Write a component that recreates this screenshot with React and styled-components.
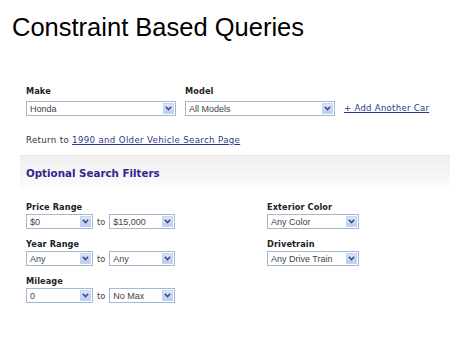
import React from 'react';
import styled, { createGlobalStyle } from 'styled-components';

const GlobalStyle = createGlobalStyle`
  html, body {
    margin: 0;
    padding: 0;
    background: #ffffff;
  }
  body {
    width: 474px;
    height: 355px;
    overflow: hidden;
    font-family: "DejaVu Sans", Verdana, sans-serif;
  }
`;

const Page = styled.div`
  width: 474px;
  height: 355px;
  background: #fff;
`;

const Title = styled.h1`
  margin: 0;
  padding: 12px 0 0 12px;
  font-family: "Liberation Sans", Arial, sans-serif;
  font-weight: normal;
  font-size: 25.5px;
  line-height: 30px;
  color: #000;
`;

const Form = styled.div`
  padding: 44px 0 0 26px;
`;

const TopRow = styled.div`
  display: flex;
  align-items: flex-end;
  gap: 9px;
`;

const Field = styled.div`
  display: flex;
  flex-direction: column;
  gap: ${p => p.$gap || 5}px;
`;

const Label = styled.div`
  font-size: 8.2px;
  font-weight: bold;
  line-height: 10px;
  color: #222;
  letter-spacing: 0.1px;
`;

const Box = styled.div`
  box-sizing: border-box;
  width: ${p => p.$w}px;
  height: 15px;
  border: 1px solid #a5b8d2;
  background: #fff;
  display: flex;
  align-items: center;
  justify-content: space-between;
  padding: 0 1px 0 3px;
`;

const BoxText = styled.span`
  font-family: "Liberation Sans", Arial, sans-serif;
  font-size: 9px;
  color: #444;
  white-space: nowrap;
`;

const Arrow = styled.span`
  width: 11px;
  height: 11px;
  background: linear-gradient(#dbe5fb, #b9cdf6);
  border: 1px solid #c6d4ef;
  box-sizing: border-box;
  display: flex;
  align-items: center;
  justify-content: center;
`;

const AddLink = styled.a`
  font-size: 8.5px;
  color: #2a3a8c;
  text-decoration: underline;
  letter-spacing: 0.3px;
  line-height: 15px;
`;

const ReturnLine = styled.div`
  margin-top: 19px;
  font-size: 8.6px;
  line-height: 10px;
  color: #333;
  letter-spacing: 0.35px;
`;

const ReturnLink = styled.a`
  color: #2a3a8c;
  text-decoration: underline;
`;

const Band = styled.div`
  margin: 10px 0 0 20px;
  width: 430px;
  height: 35px;
  border-top: 1px solid #e4e4e4;
  background: linear-gradient(#efefef, #fafafa 85%, #ffffff);
  box-sizing: border-box;
  display: flex;
  align-items: center;
  padding: 0 0 0 6px;
`;

const BandTitle = styled.div`
  font-size: 10.3px;
  font-weight: bold;
  color: #3a2390;
`;

const Filters = styled.div`
  display: grid;
  grid-template-columns: 241px 120px;
  row-gap: 10px;
  padding: 12px 0 0 26px;
`;

const Pair = styled.div`
  display: flex;
  align-items: center;
  gap: 4px;
`;

const To = styled.span`
  font-size: 8.2px;
  color: #444;
`;

function Chevron() {
  return (
    <svg width="7" height="5" viewBox="0 0 7 5">
      <path d="M0.8 0.8 L3.5 3.6 L6.2 0.8" fill="none" stroke="#3c4f7c" strokeWidth="1.6" />
    </svg>
  );
}

function Select({ value, width }) {
  return (
    <Box $w={width}>
      <BoxText>{value}</BoxText>
      <Arrow>
        <Chevron />
      </Arrow>
    </Box>
  );
}

function Range({ label, from, to }) {
  return (
    <Field $gap={2}>
      <Label>{label}</Label>
      <Pair>
        <Select value={from} width={67} />
        <To>to</To>
        <Select value={to} width={66} />
      </Pair>
    </Field>
  );
}

export default function App() {
  return (
    <Page>
      <GlobalStyle />
      <Title>Constraint Based Queries</Title>
      <Form>
        <TopRow>
          <Field>
            <Label>Make</Label>
            <Select value="Honda" width={150} />
          </Field>
          <Field>
            <Label>Model</Label>
            <Select value="All Models" width={150} />
          </Field>
          <AddLink>+ Add Another Car</AddLink>
        </TopRow>
        <ReturnLine>
          Return to <ReturnLink>1990 and Older Vehicle Search Page</ReturnLink>
        </ReturnLine>
      </Form>
      <Band>
        <BandTitle>Optional Search Filters</BandTitle>
      </Band>
      <Filters>
        <Range label="Price Range" from="$0" to="$15,000" />
        <Field $gap={2}>
          <Label>Exterior Color</Label>
          <Select value="Any Color" width={92} />
        </Field>
        <Range label="Year Range" from="Any" to="Any" />
        <Field $gap={2}>
          <Label>Drivetrain</Label>
          <Select value="Any Drive Train" width={92} />
        </Field>
        <Range label="Mileage" from="0" to="No Max" />
      </Filters>
    </Page>
  );
}
